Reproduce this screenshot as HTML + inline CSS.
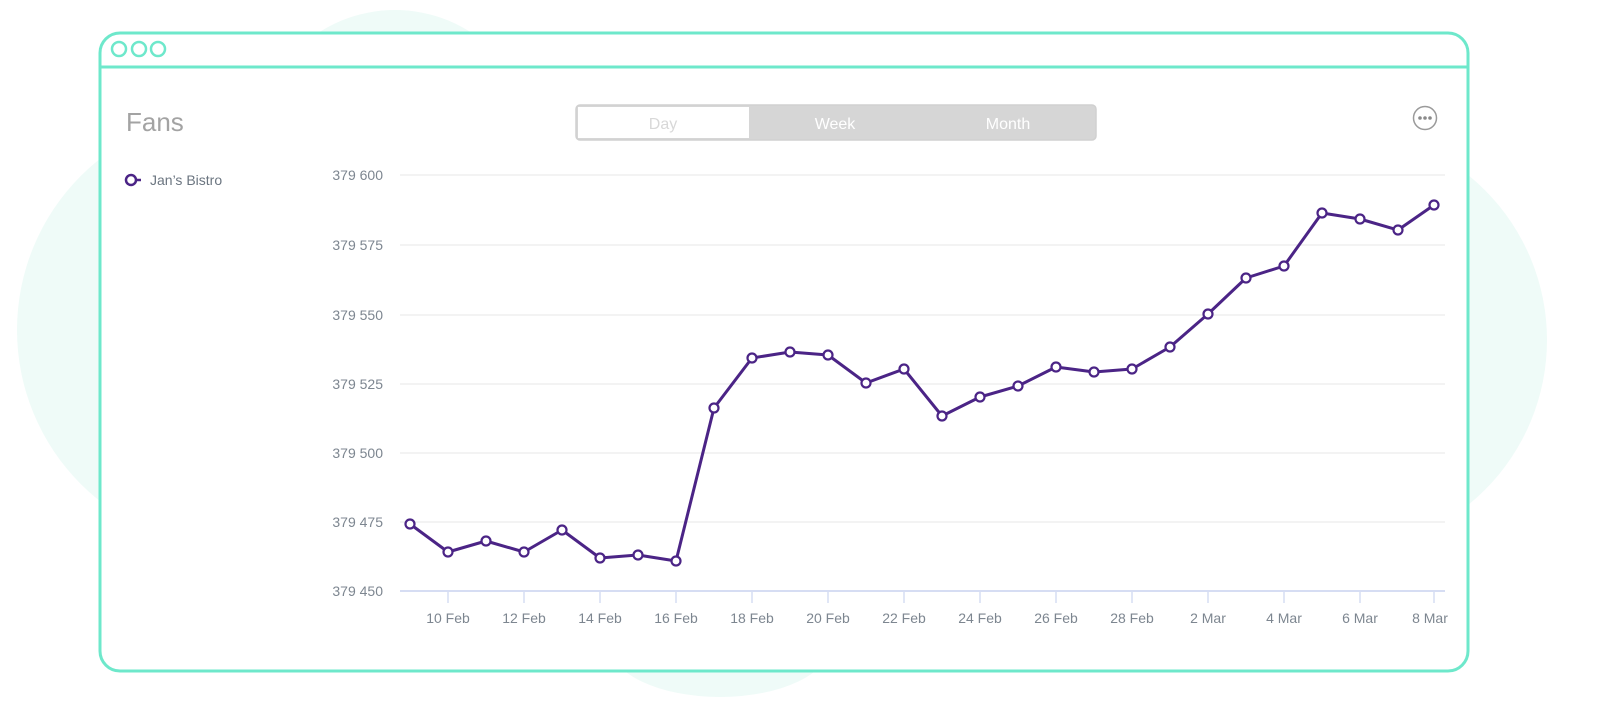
<!DOCTYPE html>
<html><head><meta charset="utf-8"><style>
html,body{margin:0;padding:0;background:#fff;}
svg{display:block;}
text{font-family:"Liberation Sans Narrow","Liberation Sans",sans-serif;}
</style></head><body>
<svg width="1600" height="720" viewBox="0 0 1600 720" xmlns="http://www.w3.org/2000/svg">
<g fill="#effbf8">
<circle cx="235" cy="330" r="218"/>
<ellipse cx="395" cy="150" rx="140" ry="140"/>
<circle cx="1335" cy="340" r="212"/>
<ellipse cx="720" cy="645" rx="110" ry="52"/>
</g>
<rect x="100" y="33" width="1368" height="638" rx="20" fill="#fff" stroke="#6ee8cb" stroke-width="3"/>
<line x1="100" y1="67" x2="1468" y2="67" stroke="#6ee8cb" stroke-width="3"/>
<g fill="none" stroke="#6ee8cb" stroke-width="2.5">
<circle cx="119" cy="49" r="7"/><circle cx="139" cy="49" r="7"/><circle cx="158" cy="49" r="7"/>
</g>
<text x="126" y="131" font-size="26" fill="#a3a3a3" style="font-family:'Liberation Sans Narrow','Liberation Sans',sans-serif">Fans</text>
<line x1="125" y1="180" x2="141" y2="180" stroke="#4b2486" stroke-width="2.5"/>
<circle cx="131" cy="180" r="5" fill="#fff" stroke="#4b2486" stroke-width="2.5"/>
<text x="150" y="185" font-size="14" fill="#6b7580" style="font-family:'Liberation Sans',sans-serif">Jan’s Bistro</text>
<rect x="576" y="105" width="520" height="35" rx="4" fill="#d6d6d6" stroke="#d0d0d0" stroke-width="1.5"/>
<rect x="578" y="107" width="171" height="31" fill="#fff"/>
<text x="663" y="129" font-size="16" fill="#d8d8d8" text-anchor="middle">Day</text>
<text x="835" y="129" font-size="16" fill="#fff" text-anchor="middle">Week</text>
<text x="1008" y="129" font-size="16" fill="#fff" text-anchor="middle">Month</text>
<circle cx="1425" cy="118" r="11.5" fill="none" stroke="#9a9a9a" stroke-width="1.5"/>
<g fill="#8a8a8a"><circle cx="1420" cy="118" r="1.8"/><circle cx="1425" cy="118" r="1.8"/><circle cx="1430" cy="118" r="1.8"/></g>
<g stroke="#ececec" stroke-width="1.2">
<line x1="400" y1="175" x2="1445" y2="175"/><line x1="400" y1="245" x2="1445" y2="245"/>
<line x1="400" y1="315" x2="1445" y2="315"/><line x1="400" y1="384" x2="1445" y2="384"/>
<line x1="400" y1="453" x2="1445" y2="453"/><line x1="400" y1="522" x2="1445" y2="522"/>
</g>
<line x1="400" y1="591" x2="1445" y2="591" stroke="#d6ddf3" stroke-width="2"/>
<g font-size="14" fill="#7d8690" text-anchor="end">
<text x="383" y="180">379 600</text><text x="383" y="250">379 575</text>
<text x="383" y="320">379 550</text><text x="383" y="389">379 525</text>
<text x="383" y="458">379 500</text><text x="383" y="527">379 475</text>
<text x="383" y="596">379 450</text>
</g>
<g stroke="#d6ddf3" stroke-width="1.5">
<line x1="448" y1="591" x2="448" y2="603"/><line x1="524" y1="591" x2="524" y2="603"/>
<line x1="600" y1="591" x2="600" y2="603"/><line x1="676" y1="591" x2="676" y2="603"/>
<line x1="752" y1="591" x2="752" y2="603"/><line x1="828" y1="591" x2="828" y2="603"/>
<line x1="904" y1="591" x2="904" y2="603"/><line x1="980" y1="591" x2="980" y2="603"/>
<line x1="1056" y1="591" x2="1056" y2="603"/><line x1="1132" y1="591" x2="1132" y2="603"/>
<line x1="1208" y1="591" x2="1208" y2="603"/><line x1="1284" y1="591" x2="1284" y2="603"/>
<line x1="1360" y1="591" x2="1360" y2="603"/><line x1="1434" y1="591" x2="1434" y2="603"/>
</g>
<g font-size="14" fill="#7d8690" text-anchor="middle">
<text x="448" y="623">10 Feb</text><text x="524" y="623">12 Feb</text><text x="600" y="623">14 Feb</text>
<text x="676" y="623">16 Feb</text><text x="752" y="623">18 Feb</text><text x="828" y="623">20 Feb</text>
<text x="904" y="623">22 Feb</text><text x="980" y="623">24 Feb</text><text x="1056" y="623">26 Feb</text>
<text x="1132" y="623">28 Feb</text><text x="1208" y="623">2 Mar</text><text x="1284" y="623">4 Mar</text>
<text x="1360" y="623">6 Mar</text><text x="1430" y="623">8 Mar</text>
</g>
<polyline fill="none" stroke="#4b2486" stroke-width="3" stroke-linejoin="round" points="410,524 448,552 486,541 524,552 562,530 600,558 638,555 676,561 714,408 752,358 790,352 828,355 866,383 904,369 942,416 980,397 1018,386 1056,367 1094,372 1132,369 1170,347 1208,314 1246,278 1284,266 1322,213 1360,219 1398,230 1434,205"/>
<g fill="#fff" stroke="#4b2486" stroke-width="2.2">
<circle cx="410" cy="524" r="4.5"/><circle cx="448" cy="552" r="4.5"/><circle cx="486" cy="541" r="4.5"/><circle cx="524" cy="552" r="4.5"/><circle cx="562" cy="530" r="4.5"/><circle cx="600" cy="558" r="4.5"/><circle cx="638" cy="555" r="4.5"/><circle cx="676" cy="561" r="4.5"/><circle cx="714" cy="408" r="4.5"/><circle cx="752" cy="358" r="4.5"/><circle cx="790" cy="352" r="4.5"/><circle cx="828" cy="355" r="4.5"/><circle cx="866" cy="383" r="4.5"/><circle cx="904" cy="369" r="4.5"/><circle cx="942" cy="416" r="4.5"/><circle cx="980" cy="397" r="4.5"/><circle cx="1018" cy="386" r="4.5"/><circle cx="1056" cy="367" r="4.5"/><circle cx="1094" cy="372" r="4.5"/><circle cx="1132" cy="369" r="4.5"/><circle cx="1170" cy="347" r="4.5"/><circle cx="1208" cy="314" r="4.5"/><circle cx="1246" cy="278" r="4.5"/><circle cx="1284" cy="266" r="4.5"/><circle cx="1322" cy="213" r="4.5"/><circle cx="1360" cy="219" r="4.5"/><circle cx="1398" cy="230" r="4.5"/><circle cx="1434" cy="205" r="4.5"/>
</g>
</svg>
</body></html>
